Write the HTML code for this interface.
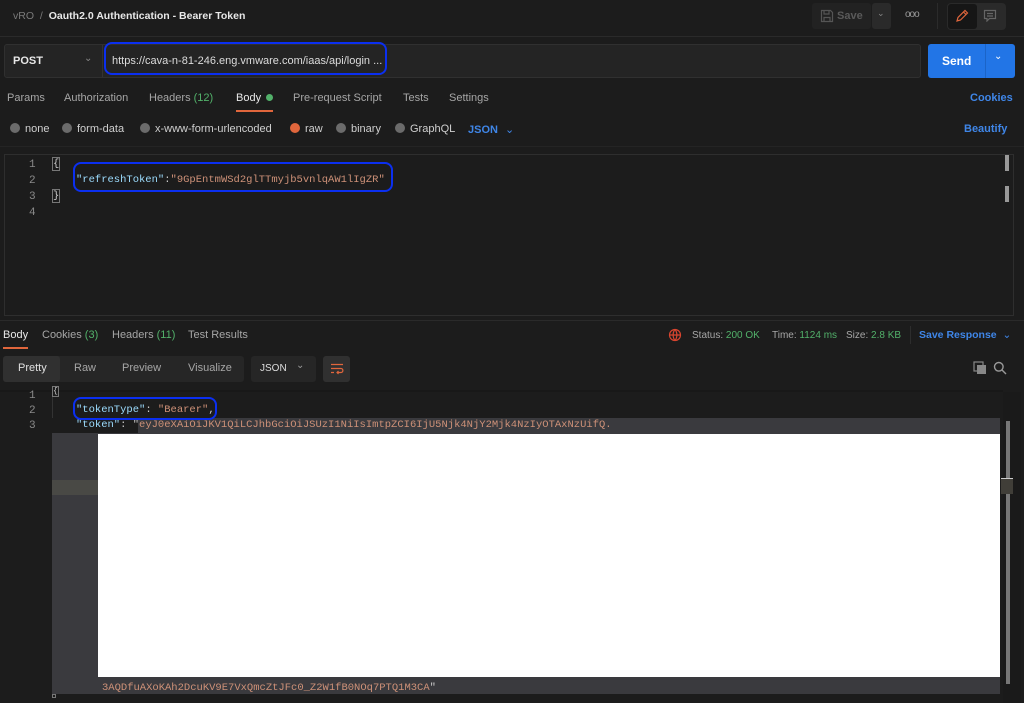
<!DOCTYPE html>
<html><head><meta charset="utf-8"><style>
*{margin:0;padding:0;box-sizing:border-box}
body{width:1024px;height:703px;background:#1c1c1c;font-family:"Liberation Sans",sans-serif;font-size:11px;color:#a6a6a6;position:relative;overflow:hidden}
.a{position:absolute;white-space:nowrap}
.mono{font-family:"Liberation Mono",monospace;font-size:10.5px}
.blue{color:#3f86e8}
.g{color:#52b16a}
.key{color:#9cdcfe}
.str{color:#ce9178}
.ln{color:#8a8a8a;font-family:"Liberation Mono",monospace;font-size:11px}
.rad{display:inline-block;width:10px;height:10px;border-radius:50%;background:#6b6b6b;vertical-align:-1px;margin-right:5px}
.ring{position:absolute;border:2px solid #0b2ff0;border-radius:8px}
</style></head><body>
<!-- top bar -->
<div class="a" style="left:13px;top:10px;font-size:10.5px;color:#7a7a7a">vRO <span style="margin:0 3px">/</span> <span style="color:#e8e8e8;font-weight:bold">Oauth2.0 Authentication - Bearer Token</span></div>
<div class="a" style="left:812px;top:3px;width:59px;height:26px;background:#222;border-radius:3px"></div>
<div class="a" style="left:872px;top:3px;width:19px;height:26px;background:#2a2a2a;border-radius:3px"></div>
<svg class="a" style="left:820px;top:9px" width="14" height="14" viewBox="0 0 14 14" fill="none" stroke="#555" stroke-width="1.2"><path d="M1.5 1.5h9l2 2v9h-11z M4 1.5v3.5h5V1.5 M4 12.5V8.5h6v4"/></svg>
<div class="a" style="left:837px;top:10px;color:#5a5a5a;font-weight:bold">Save</div>
<div class="a" style="left:877px;top:8px;color:#888;font-size:9px">&#8964;</div>
<div class="a" style="left:905px;top:9px;color:#999;font-size:10px;letter-spacing:-1px">ooo</div>
<div class="a" style="left:937px;top:3px;width:1px;height:26px;background:#2b2b2b"></div>
<div class="a" style="left:947px;top:3px;width:59px;height:27px;background:#2a2a2a;border-radius:4px"></div>
<div class="a" style="left:948px;top:4px;width:29px;height:25px;background:#161616;border-radius:3px"></div>
<svg class="a" style="left:955px;top:9px" width="14" height="14" viewBox="0 0 14 14" fill="none" stroke="#e0663c" stroke-width="1.2"><path d="M2 12l1-3.5L10 1.5l2.5 2.5-7 7z M8.5 3l2.5 2.5"/></svg>
<svg class="a" style="left:983px;top:9px" width="14" height="13" viewBox="0 0 14 13" fill="none" stroke="#666" stroke-width="1.2"><path d="M1.5 1.5h11v8h-6l-2.5 2.5v-2.5h-2.5z M4 4.5h6 M4 7h6"/></svg>
<div class="a" style="left:0;top:36px;width:1024px;height:1px;background:#2a2a2a"></div>
<!-- URL bar -->
<div class="a" style="left:4px;top:44px;width:917px;height:34px;background:#242424;border:1px solid #303030;border-radius:3px"></div>
<div class="a" style="left:102px;top:45px;width:1px;height:32px;background:#333"></div>
<div class="a" style="left:13px;top:55px;color:#e8e8e8;font-weight:bold">POST</div>
<div class="a" style="left:84px;top:53px;color:#888;font-size:10px">&#8964;</div>
<div class="a" style="left:112px;top:55px;color:#dcdcdc">https://cava-n-81-246.eng.vmware.com/iaas/api/login ...</div>
<div class="ring" style="left:104px;top:42px;width:283px;height:33px"></div>
<div class="a" style="left:928px;top:44px;width:87px;height:34px;background:#2275e6;border-radius:3px"></div>
<div class="a" style="left:985px;top:44px;width:1px;height:34px;background:#1b64c8"></div>
<div class="a" style="left:942px;top:54px;color:#fff;font-weight:bold;font-size:12px">Send</div>
<div class="a" style="left:994px;top:51px;color:#fff;font-size:10px">&#8964;</div>
<!-- tabs -->
<div class="a" style="left:7px;top:92px">Params</div>
<div class="a" style="left:64px;top:92px">Authorization</div>
<div class="a" style="left:149px;top:92px">Headers <span class="g">(12)</span></div>
<div class="a" style="left:236px;top:92px;color:#e8e8e8">Body <span style="display:inline-block;width:7px;height:7px;border-radius:50%;background:#52b16a;margin-left:2px"></span></div>
<div class="a" style="left:236px;top:110px;width:37px;height:2px;background:#e0663c"></div>
<div class="a" style="left:293px;top:92px">Pre-request Script</div>
<div class="a" style="left:403px;top:92px">Tests</div>
<div class="a" style="left:449px;top:92px">Settings</div>
<div class="a blue" style="left:970px;top:92px;font-weight:bold">Cookies</div>
<div class="a" style="left:10px;top:123px;color:#cfcfcf"><span class="rad"></span>none</div>
<div class="a" style="left:62px;top:123px;color:#cfcfcf"><span class="rad"></span>form-data</div>
<div class="a" style="left:140px;top:123px;color:#cfcfcf"><span class="rad"></span>x-www-form-urlencoded</div>
<div class="a" style="left:290px;top:123px;color:#cfcfcf"><span class="rad" style="background:#e0663c"></span>raw</div>
<div class="a" style="left:336px;top:123px;color:#cfcfcf"><span class="rad"></span>binary</div>
<div class="a" style="left:395px;top:123px;color:#cfcfcf"><span class="rad"></span>GraphQL</div>
<div class="a blue" style="left:468px;top:123px;font-weight:bold">JSON <span style="margin-left:4px;font-weight:normal">&#8964;</span></div>
<div class="a blue" style="left:964px;top:123px;font-weight:bold">Beautify</div>
<!-- request editor -->
<div class="a" style="left:0;top:146px;width:1024px;height:1px;background:#242424"></div>
<div class="a" style="left:4px;top:154px;width:1010px;height:162px;border:1px solid #2e2e2e"></div>
<div class="a" style="left:1005px;top:155px;width:4px;height:16px;background:#999"></div>
<div class="a" style="left:1005px;top:186px;width:4px;height:16px;background:#999"></div>
<div class="a ln" style="left:29px;top:157px;line-height:16px">1<br>2<br>3<br>4</div>
<div class="a mono" style="left:52px;top:156px;line-height:16px;color:#ccc"><span style="border:1px solid #777">{</span><br><span style="margin-left:24px"><span class="key">"refreshToken"</span>:<span class="str">"9GpEntmWSd2glTTmyjb5vnlqAW1lIgZR"</span></span><br><span style="border:1px solid #777">}</span></div>
<div class="ring" style="left:73px;top:162px;width:320px;height:30px"></div>
<!-- response -->
<div class="a" style="left:0;top:320px;width:1024px;height:1px;background:#2a2a2a"></div>
<div class="a" style="left:3px;top:329px;color:#e8e8e8">Body</div>
<div class="a" style="left:3px;top:347px;width:25px;height:2px;background:#e0663c"></div>
<div class="a" style="left:42px;top:329px">Cookies <span class="g">(3)</span></div>
<div class="a" style="left:112px;top:329px">Headers <span class="g">(11)</span></div>
<div class="a" style="left:188px;top:329px">Test Results</div>
<svg class="a" style="left:668px;top:328px" width="14" height="14" viewBox="0 0 14 14" fill="none" stroke="#d9452f" stroke-width="1.2"><circle cx="7" cy="7" r="5.5"/><path d="M1.5 7h11 M7 1.5c-2.5 3-2.5 8 0 11 M7 1.5c2.5 3 2.5 8 0 11"/></svg>
<div class="a" style="left:692px;top:330px;font-size:10px">Status: <span class="g">200 OK</span></div>
<div class="a" style="left:772px;top:330px;font-size:10px">Time: <span class="g">1124 ms</span></div>
<div class="a" style="left:846px;top:330px;font-size:10px">Size: <span class="g">2.8 KB</span></div>
<div class="a" style="left:910px;top:326px;width:1px;height:18px;background:#2d2d2d"></div>
<div class="a blue" style="left:919px;top:329px;font-weight:bold;font-size:10.5px">Save Response <span style="font-weight:normal;margin-left:3px">&#8964;</span></div>
<div class="a" style="left:3px;top:356px;width:241px;height:26px;background:#262626;border-radius:3px"></div>
<div class="a" style="left:3px;top:356px;width:57px;height:26px;background:#303030;border-radius:3px"></div>
<div class="a" style="left:18px;top:362px;color:#e0e0e0">Pretty</div>
<div class="a" style="left:74px;top:362px">Raw</div>
<div class="a" style="left:122px;top:362px">Preview</div>
<div class="a" style="left:188px;top:362px">Visualize</div>
<div class="a" style="left:251px;top:356px;width:65px;height:26px;background:#262626;border-radius:3px"></div>
<div class="a" style="left:260px;top:363px;color:#ddd;font-size:10px">JSON</div>
<div class="a" style="left:296px;top:360px;color:#999;font-size:10px">&#8964;</div>
<div class="a" style="left:323px;top:356px;width:27px;height:26px;background:#303030;border-radius:3px"></div>
<svg class="a" style="left:330px;top:362px" width="14" height="14" viewBox="0 0 14 14" fill="none" stroke="#e0663c" stroke-width="1.2"><path d="M1 2.5h12 M1 6.5h10c2.5 0 2.5 4 0 4H7 M8.5 9l-1.5 1.5 1.5 1.5 M1 10.5h3"/></svg>
<svg class="a" style="left:973px;top:361px" width="14" height="14" viewBox="0 0 14 14"><rect x="1" y="1" width="9" height="9" fill="none" stroke="#888" stroke-width="1.2"/><rect x="4" y="4" width="9" height="9" fill="#888"/></svg>
<svg class="a" style="left:993px;top:361px" width="14" height="14" viewBox="0 0 14 14" fill="none" stroke="#999" stroke-width="1.4"><circle cx="5.8" cy="5.8" r="4.3"/><path d="M9 9l4 4"/></svg>
<div class="a" style="left:0;top:390px;width:1003px;height:2px;background:#181818"></div>
<!-- response body -->
<div class="a" style="left:52px;top:392px;width:1px;height:302px;background:#333"></div>
<div class="a" style="left:52px;top:418px;width:948px;height:276px;background:#3a3a3e"></div>
<div class="a" style="left:52px;top:418px;width:86px;height:15px;background:#1c1c1c"></div>
<div class="a" style="left:52px;top:480px;width:46px;height:15px;background:#494945"></div>
<div class="a" style="left:98px;top:434px;width:902px;height:243px;background:#fff"></div>
<div class="a" style="left:1003px;top:392px;width:18px;height:311px;background:#1a1a1a"></div>
<div class="a" style="left:1006px;top:421px;width:4px;height:263px;background:#777"></div>
<div class="a" style="left:1001px;top:478px;width:12px;height:16px;background:#403e38;border-top:1px solid #ccc"></div>
<div class="a ln" style="left:29px;top:389px;line-height:15px">1<br>2<br>3</div>
<div class="a mono" style="left:52px;top:388px;line-height:15px;color:#ccc">
<span style="border:1px solid #777;font-size:8px;line-height:8px;vertical-align:top">{</span><br>
<span style="margin-left:24px"><span class="key">"tokenType"</span>: <span class="str">"Bearer"</span>,</span><br>
<span style="margin-left:24px"><span class="key">"token"</span>: "<span class="str" style="background:#3a3a3e">eyJ0eXAiOiJKV1QiLCJhbGciOiJSUzI1NiIsImtpZCI6IjU5Njk4NjY2Mjk4NzIyOTAxNzUifQ.</span></span></div>
<div class="ring" style="left:73px;top:397px;width:144px;height:23px"></div>
<div class="a mono" style="left:102px;top:681px;line-height:15px"><span class="str">3AQDfuAXoKAh2DcuKV9E7VxQmcZtJFc0_Z2W1fB0NOq7PTQ1M3CA</span><span style="color:#ccc">"</span></div>
<div class="a" style="left:52px;top:694px;width:4px;height:4px;border:1px solid #777"></div>
</body></html>
